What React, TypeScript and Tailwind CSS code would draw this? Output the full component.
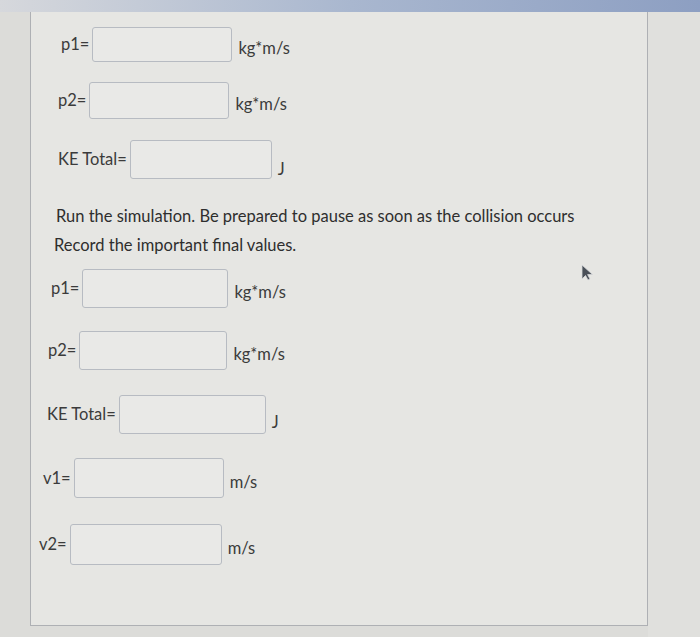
import React from 'react';

type Row = {
  label: string;
  unit: string;
  pad: string;
  top: string;
  box: string;
  unitClass: string;
};

const before: Row[] = [
  { label: 'p1=', unit: 'kg*m/s', pad: 'pl-[30px]', top: 'mt-[15px]', box: 'w-[140px] h-[35px]', unitClass: 'mt-[8px]' },
  { label: 'p2=', unit: 'kg*m/s', pad: 'pl-[27px]', top: 'mt-[20px]', box: 'w-[140px] h-[37px]', unitClass: 'mt-[8px]' },
  { label: 'KE Total=', unit: 'J', pad: 'pl-[27px]', top: 'mt-[21px]', box: 'w-[142px] h-[39px]', unitClass: 'self-end -mb-[3px] text-[14px]' },
];

const after: Row[] = [
  { label: 'p1=', unit: 'kg*m/s', pad: 'pl-[20px]', top: 'mt-[14px]', box: 'w-[146px] h-[39px]', unitClass: 'mt-[8px]' },
  { label: 'p2=', unit: 'kg*m/s', pad: 'pl-[17px]', top: 'mt-[23px]', box: 'w-[148px] h-[39px]', unitClass: 'mt-[8px]' },
  { label: 'KE Total=', unit: 'J', pad: 'pl-[16px]', top: 'mt-[25px]', box: 'w-[147px] h-[39px]', unitClass: 'self-end -mb-[1px] text-[14px]' },
  { label: 'v1=', unit: 'm/s', pad: 'pl-[12px]', top: 'mt-[24px]', box: 'w-[150px] h-[40px]', unitClass: 'mt-[8px]' },
  { label: 'v2=', unit: 'm/s', pad: 'pl-[8px]', top: 'mt-[26px]', box: 'w-[152px] h-[41px]', unitClass: 'mt-[8px]' },
];

function AnswerRow({ row }: { row: Row }) {
  return (
    <div className={`flex items-center ${row.pad} ${row.top}`}>
      <span className="text-[16.5px] text-[#3b3b3b] mr-[3px]">{row.label}</span>
      <div className={`${row.box} rounded-[3px] border border-[#b7bbc2] bg-[#e9e9e7]`} />
      <span className={`text-[16.5px] text-[#3b3b3b] ml-[6px] ${row.unitClass}`}>{row.unit}</span>
    </div>
  );
}

export default function App() {
  return (
    <div
      className="relative w-[700px] h-[637px] overflow-hidden bg-[#dcdcd9] flex flex-col"
      style={{ fontFamily: 'Lato, "Open Sans", sans-serif' }}
    >
      {/* top window strip */}
      <div className="h-[12px] shrink-0 bg-gradient-to-r from-[#d6d8dc] via-[#a9b7cf] to-[#8d9fc2]" />

      <div className="flex flex-1">
        <div className="w-[30px] shrink-0" />
        <div className="w-[618px] h-[614px] border-l border-r border-b border-[#aeb0b4] bg-[#e6e6e3] flex flex-col">
          {before.map((r, i) => (
            <AnswerRow key={i} row={r} />
          ))}

          <p className="mt-[27px] pl-[25px] text-[16.5px] leading-[20px] text-[#2e2e2e]">
            Run the simulation. Be prepared to pause as soon as the collision occurs
          </p>
          <p className="mt-[9px] pl-[23px] text-[16.5px] leading-[20px] text-[#2e2e2e]">
            Record the important final values.
          </p>

          {after.map((r, i) => (
            <AnswerRow key={i} row={r} />
          ))}
        </div>
        <div className="flex-1 bg-[#e0e0dd]" />
      </div>

      {/* mouse pointer */}
      <svg className="absolute left-[578px] top-[262px]" width="20" height="20" viewBox="0 0 20 20">
        <path d="M4 3 L4 17 L7.5 13.5 L10 18 L12 17 L9.6 12.6 L14.5 12.5 Z" fill="#4a5058" stroke="#d8d9dc" strokeWidth="0.8" />
      </svg>
    </div>
  );
}
